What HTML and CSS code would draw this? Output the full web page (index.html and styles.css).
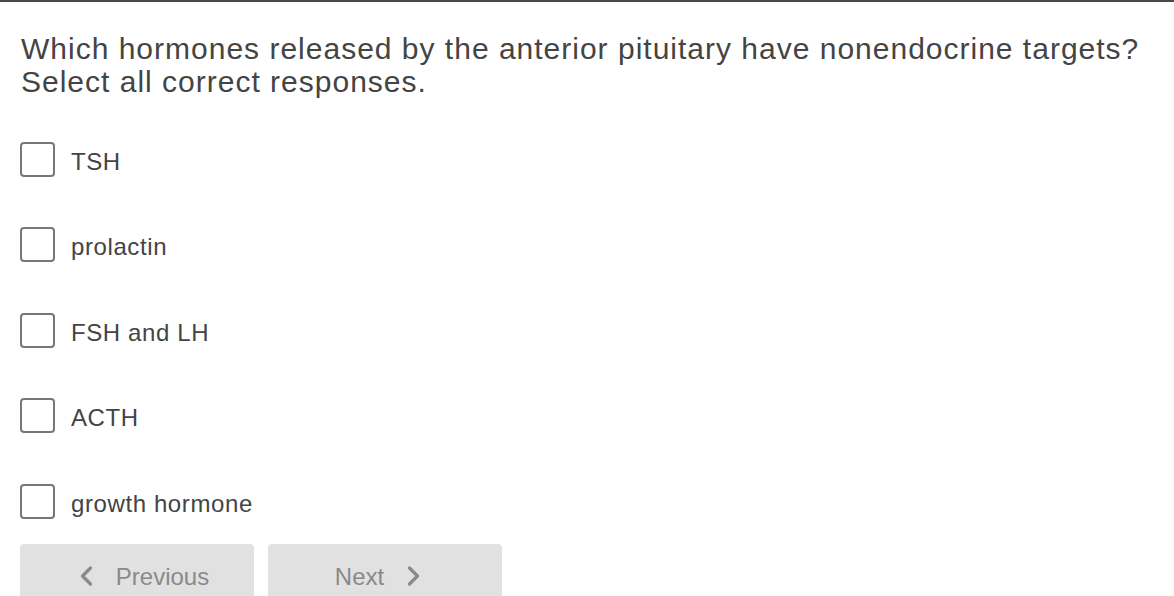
FILE: index.html
```html
<!DOCTYPE html>
<html>
<head>
<meta charset="utf-8">
<link rel="stylesheet" href="styles.css">
</head>
<body>
<div class="page">
  <div class="question">Which hormones released by the anterior pituitary have nonendocrine targets?<br>Select all correct responses.</div>
  <div class="options">
    <label class="option"><span class="box"></span><span class="label">TSH</span></label>
    <label class="option"><span class="box"></span><span class="label">prolactin</span></label>
    <label class="option"><span class="box"></span><span class="label">FSH and LH</span></label>
    <label class="option"><span class="box"></span><span class="label">ACTH</span></label>
    <label class="option"><span class="box"></span><span class="label">growth hormone</span></label>
  </div>
  <div class="nav">
    <div class="btn btn-prev"><svg class="chev" width="14" height="22" viewBox="0 0 14 22"><path d="M11.5 3 L3.5 11 L11.5 19" fill="none" stroke="#8a8a8a" stroke-width="3.2" stroke-linecap="round" stroke-linejoin="round"/></svg><span>Previous</span></div>
    <div class="btn btn-next"><span>Next</span><svg class="chev" width="14" height="22" viewBox="0 0 14 22"><path d="M2.5 3 L10.5 11 L2.5 19" fill="none" stroke="#8a8a8a" stroke-width="3.2" stroke-linecap="round" stroke-linejoin="round"/></svg></div>
  </div>
</div>
</body>
</html>
```
FILE: styles.css
```css
html, body {
  margin: 0;
  padding: 0;
  background: #fff;
}
body {
  font-family: "Liberation Sans", Arial, sans-serif;
  color: #444;
  overflow: hidden;
}
.page {
  border-top: 2px solid #4a4a4a;
  padding: 30px 0 0 21px;
}
.question {
  font-size: 30px;
  line-height: 33px;
  letter-spacing: 1px;
  color: #444;
  white-space: nowrap;
}
.options {
  margin-top: 44px;
  display: flex;
  flex-direction: column;
  gap: 50.4px;
  margin-left: -1px;
}
.option {
  display: flex;
  align-items: center;
  height: 35px;
}
.box {
  width: 31px;
  height: 31px;
  border: 2px solid #777;
  border-radius: 4px;
  flex: none;
}
.label {
  margin-left: 16px;
  padding-top: 5px;
  font-size: 24px;
  letter-spacing: 0.6px;
  color: #444;
}
.nav {
  margin-top: 25px;
  margin-left: -1px;
  display: flex;
  gap: 14px;
}
.btn {
  width: 234px;
  height: 62px;
  background: #e1e1e1;
  border-radius: 4px;
  display: flex;
  align-items: center;
  justify-content: center;
  gap: 23px;
  font-size: 24px;
  color: #8a8a8a;
  padding-top: 3px;
  box-sizing: border-box;
}
.btn-prev {
  padding-left: 14px;
}
.btn-next {
  padding-right: 14px;
}
.btn span {
  padding-top: 2px;
}
```
